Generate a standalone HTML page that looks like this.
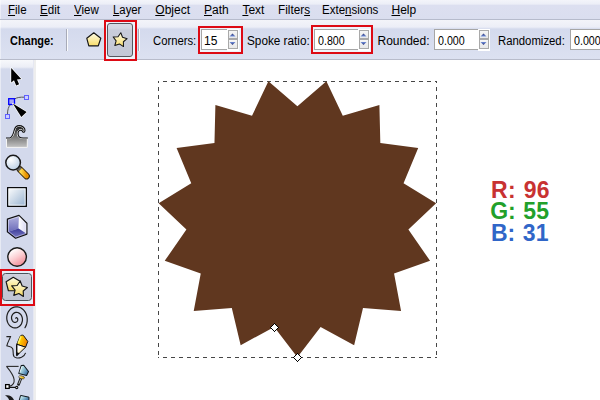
<!DOCTYPE html>
<html><head><meta charset="utf-8">
<style>
html,body{margin:0;padding:0;width:600px;height:400px;overflow:hidden;background:#fff;}
body{position:relative;font-family:"Liberation Sans",sans-serif;}
.a{position:absolute;}
#menubar{left:0;top:0;width:600px;height:19px;background:linear-gradient(#f3f4fa 0px,#eceef7 4px,#dcdff0 5.5px,#dadeef 19px);}
#menuline{left:0;top:19px;width:600px;height:1px;background:#b6bbcc;}
#toolbar{left:0;top:20px;width:600px;height:39px;background:linear-gradient(#f3f4f9 0px,#eceef7 7px,#d4daed 9px,#dce1f1 39px);}
#tbline{left:0;top:59px;width:600px;height:1px;background:#b8bccb;}
#toolbox{left:0;top:60px;width:33px;height:340px;background:linear-gradient(#f7f8fb 0px,#eceef6 7px,#d3d9ec 9px,#d3d9ec 340px);}
.t{position:absolute;font-size:12px;color:#000;white-space:nowrap;line-height:14px;transform-origin:0 0;}
.u{text-decoration:underline;}
.red{position:absolute;box-sizing:border-box;border:2px solid #dd0a14;}
.fld{position:absolute;box-sizing:border-box;top:29px;height:21px;background:#fff;border:1px solid #a6a6a6;border-right:none;}
.spw{position:absolute;top:29px;height:22px;width:12px;background:#fff;}
.spf{position:absolute;box-sizing:border-box;top:30px;height:19px;width:10px;border:1px solid #a9a9a9;background:#a9a9a9;}
.spb{position:absolute;left:0;width:8px;background:linear-gradient(#f6f6f6,#e8e8e8);}
.val{position:absolute;font-size:12px;line-height:14px;top:34px;white-space:nowrap;transform-origin:0 0;transform:scaleX(0.89);}
</style></head><body>
<div class="a" id="menubar"></div>
<div class="a" id="menuline"></div>
<div class="a" id="toolbar"></div>
<div class="a" id="tbline"></div>
<div class="a" id="toolbox"></div>
<div class="a" style="left:33px;top:60px;width:1px;height:340px;background:#e6e8f2"></div>
<div class="a" style="left:0;top:0;width:1px;height:19px;background:rgba(255,255,255,0.45)"></div>
<div class="a" style="left:0;top:20px;width:1px;height:39px;background:rgba(255,255,255,0.45)"></div>
<div class="a" style="left:0;top:60px;width:1px;height:340px;background:rgba(255,255,255,0.45)"></div>
<div class="a" style="left:34px;top:60px;width:2px;height:340px;background:#eeeeee"></div>

<!-- menu -->
<div class="t" style="left:8px;top:3px;transform:scaleX(.96)"><span class="u">F</span>ile</div>
<div class="t" style="left:39.5px;top:3px;transform:scaleX(.965)"><span class="u">E</span>dit</div>
<div class="t" style="left:74px;top:3px;transform:scaleX(.96)"><span class="u">V</span>iew</div>
<div class="t" style="left:112.5px;top:3px;transform:scaleX(.945)"><span class="u">L</span>ayer</div>
<div class="t" style="left:155.3px;top:3px"><span class="u">O</span>bject</div>
<div class="t" style="left:204px;top:3px"><span class="u">P</span>ath</div>
<div class="t" style="left:242.4px;top:3px"><span class="u">T</span>ext</div>
<div class="t" style="left:277.6px;top:3px;transform:scaleX(.98)">Filter<span class="u">s</span></div>
<div class="t" style="left:322.2px;top:3px;transform:scaleX(.96)">Exte<span class="u">n</span>sions</div>
<div class="t" style="left:391.5px;top:3px"><span class="u">H</span>elp</div>

<!-- toolbar -->
<div class="t" style="left:10px;top:34px;font-weight:bold;transform:scaleX(0.91)">Change:</div>
<div class="a" style="left:66px;top:29px;width:1px;height:22px;background:#a8abb8"></div>
<div class="a" style="left:67px;top:29px;width:1px;height:22px;background:#fafbfd"></div>
<div class="a" style="left:138px;top:29px;width:1px;height:22px;background:#a8abb8"></div>
<div class="a" style="left:139px;top:29px;width:1px;height:22px;background:#fafbfd"></div>

<div class="a" style="left:106px;top:22px;width:29px;height:37px;background:#eef2fa"></div>
<div class="a" style="box-sizing:border-box;left:107px;top:23px;width:26px;height:34px;border:1px solid #55575f;border-radius:3px;background:linear-gradient(#d8dbe5 0px,#d4d7e2 4px,#c9ccda 6px,#c3c7d6 32px)"></div>
<div class="red" style="left:104px;top:20px;width:33px;height:41px"></div>

<svg class="a" style="left:0;top:0" width="140" height="60">
<defs>
<linearGradient id="yg" x1="0" y1="0" x2="0" y2="1"><stop offset="0" stop-color="#fffde8"/><stop offset="1" stop-color="#f7dc6a"/></linearGradient>
</defs>
<polygon points="93.8,32.8 100.8,38.3 98.3,45.8 88.8,45.8 86.8,38.3" fill="url(#yg)" stroke="#151515" stroke-width="1.15" stroke-linejoin="round"/>
<polygon points="120.80,32.76 122.52,37.29 127.16,38.69 123.39,41.73 123.49,46.57 119.43,43.92 114.85,45.51 116.12,40.83 113.19,36.97 118.03,36.73" fill="url(#yg)" stroke="#151515" stroke-width="1.05" stroke-linejoin="round"/>
</svg>

<div class="t" style="left:153px;top:34px;transform:scaleX(0.94)">Corners:</div>
<div class="a" style="left:200px;top:28px;width:41px;height:24px;background:#eef3fa"></div>
<div class="fld" style="left:201px;width:26px"></div>
<div class="spw" style="left:227px"></div>
<div class="spf" style="left:228px"><div class="spb" style="top:0;height:7px"></div><div class="spb" style="top:9px;height:8px"></div></div>
<div class="val" style="left:204px;transform:none">15</div>
<div class="red" style="left:198px;top:26px;width:45px;height:28px"></div>

<div class="t" style="left:246.5px;top:34px;transform:scaleX(0.98)">Spoke ratio:</div>
<div class="a" style="left:313px;top:27px;width:58px;height:25px;background:#eef3fa"></div>
<div class="fld" style="left:314px;width:44px"></div>
<div class="spw" style="left:358px"></div>
<div class="spf" style="left:359px"><div class="spb" style="top:0;height:7px"></div><div class="spb" style="top:9px;height:8px"></div></div>
<div class="val" style="left:317.7px">0.800</div>
<div class="red" style="left:311px;top:25px;width:62px;height:29px"></div>

<div class="t" style="left:377.5px;top:34px">Rounded:</div>
<div class="fld" style="left:434px;width:44px"></div>
<div class="spw" style="left:478px"></div>
<div class="spf" style="left:479px"><div class="spb" style="top:0;height:7px"></div><div class="spb" style="top:9px;height:8px"></div></div>
<div class="val" style="left:437.7px">0.000</div>

<div class="t" style="left:498px;top:34px;transform:scaleX(0.945)">Randomized:</div>
<div class="fld" style="left:570px;width:40px"></div>
<div class="val" style="left:574px">0.000</div>

<svg class="a" style="left:0;top:0" width="600" height="60">
<defs>
<linearGradient id="ag" x1="0" y1="0" x2="0" y2="1"><stop offset="0" stop-color="#7090e0"/><stop offset="1" stop-color="#2c3470"/></linearGradient><linearGradient id="agu" x1="0" y1="1" x2="0" y2="0"><stop offset="0" stop-color="#7090e0"/><stop offset="1" stop-color="#2c3470"/></linearGradient>
</defs>
<g fill="url(#agu)">
<path d="M229.5 36.5 L232.5 33.5 L235.5 36.5 Z"/>
<path d="M360.5 36.5 L363.5 33.5 L366.5 36.5 Z"/>
<path d="M480.5 36.5 L483.5 33.5 L486.5 36.5 Z"/>
</g>
<g fill="url(#ag)">
<path d="M229.5 42 L235.5 42 L232.5 45 Z"/>
<path d="M360.5 42 L366.5 42 L363.5 45 Z"/>
<path d="M480.5 42 L486.5 42 L483.5 45 Z"/>
</g>
</svg>

<!-- canvas -->
<svg class="a" style="left:0;top:0" width="600" height="400">
<g fill="none" stroke="#464646" stroke-width="1" stroke-dasharray="4 4">
<path d="M158,81.5 H437" stroke-dashoffset="3"/>
<path d="M158,357.5 H437" stroke-dashoffset="3"/>
<path d="M158.5,81 V358" stroke-dashoffset="2"/>
<path d="M436.5,81 V358" stroke-dashoffset="2"/>
</g>
<polygon fill="#60371f" points="297.40,357.25 274.20,326.91 240.66,345.19 231.80,308.04 193.73,311.09 200.75,273.55 164.73,260.86 186.41,229.42 158.66,203.17 191.26,183.26 176.59,148.00 214.47,143.08 215.40,104.89 252.01,115.80 268.40,81.30 297.40,106.15 326.40,81.30 342.79,115.80 379.40,104.89 380.33,143.08 418.21,148.00 403.54,183.26 436.14,203.17 408.39,229.42 430.07,260.86 394.05,273.55 401.07,311.09 363.00,308.04 354.14,345.19 320.60,326.91"/>
<path d="M297.5 353.5 L301.5 357.5 L297.5 361.5 L293.5 357.5 Z" fill="#fff" stroke="#000" stroke-width="1" shape-rendering="crispEdges"/>
<path d="M274.5 323.5 L278.5 327.5 L274.5 331.5 L270.5 327.5 Z" fill="#fff" stroke="#000" stroke-width="1" shape-rendering="crispEdges"/>
</svg>

<div class="a" style="left:491px;top:179.6px;font-size:23px;font-weight:bold;line-height:21.5px;word-spacing:1.2px">
<div style="color:#c83232;letter-spacing:0.3px">R: 96</div>
<div style="color:#22a02a;margin-left:-0.8px">G: 55</div>
<div style="color:#3066c8">B: 31</div>
</div>

<!-- TOOLBOX -->
<svg class="a" style="left:0;top:0" width="40" height="400">
<defs>
<linearGradient id="wg" x1="0" y1="0" x2="0" y2="1"><stop offset="0" stop-color="#1e1e1e"/><stop offset="0.55" stop-color="#808080"/><stop offset="1" stop-color="#c4c4c4"/></linearGradient>
<radialGradient id="lens" cx="0.35" cy="0.3" r="0.8"><stop offset="0" stop-color="#ffffff"/><stop offset="1" stop-color="#b8cde4"/></radialGradient>
<linearGradient id="hg" x1="0" y1="0" x2="1" y2="0"><stop offset="0" stop-color="#ffd84a"/><stop offset="1" stop-color="#e89000"/></linearGradient>
<linearGradient id="rg" x1="0" y1="0" x2="1" y2="1"><stop offset="0" stop-color="#ffffff"/><stop offset="1" stop-color="#94b0cf"/></linearGradient>
<linearGradient id="eg" x1="0.25" y1="0.1" x2="0.75" y2="0.95"><stop offset="0" stop-color="#ffffff"/><stop offset="0.45" stop-color="#fcd0d4"/><stop offset="1" stop-color="#f08a96"/></linearGradient>
<linearGradient id="bl" x1="0" y1="0" x2="0" y2="1"><stop offset="0" stop-color="#b4b4e0"/><stop offset="1" stop-color="#6a6ab8"/></linearGradient>
<linearGradient id="br" x1="0" y1="0" x2="1" y2="0"><stop offset="0" stop-color="#ffffff"/><stop offset="1" stop-color="#d4d4f2"/></linearGradient>
<linearGradient id="bf" x1="0" y1="0" x2="0" y2="1"><stop offset="0" stop-color="#3a3a98"/><stop offset="1" stop-color="#7c7cc4"/></linearGradient>
<linearGradient id="yg2" x1="0" y1="0" x2="0" y2="1"><stop offset="0" stop-color="#fffde8"/><stop offset="1" stop-color="#f5d860"/></linearGradient>
<linearGradient id="btn" x1="0" y1="0" x2="0" y2="1"><stop offset="0" stop-color="#d0d3df"/><stop offset="0.2" stop-color="#c8cbd9"/><stop offset="1" stop-color="#c0c4d3"/></linearGradient>
<linearGradient id="pb" x1="0" y1="0" x2="1" y2="0.3"><stop offset="0" stop-color="#ffee30"/><stop offset="0.4" stop-color="#ffcc00"/><stop offset="1" stop-color="#f08400"/></linearGradient>
<linearGradient id="pw" x1="0" y1="0" x2="1" y2="1"><stop offset="0.3" stop-color="#ffffff"/><stop offset="1" stop-color="#f4c020"/></linearGradient>
<linearGradient id="nb" x1="0" y1="0.2" x2="1" y2="0.8"><stop offset="0" stop-color="#e0f4f8"/><stop offset="0.35" stop-color="#a8d4e0"/><stop offset="1" stop-color="#2e66a0"/></linearGradient>
<linearGradient id="gb" x1="0" y1="0" x2="1" y2="0"><stop offset="0" stop-color="#fffce8"/><stop offset="0.45" stop-color="#f8d040"/><stop offset="1" stop-color="#e8a800"/></linearGradient>
</defs>
<!-- selector arrow -->
<path d="M11.2,68 L11.2,82.6 L14,80.3 L16.2,85.6 L19.1,84.3 L17,79.4 L21.2,78.9 Z" fill="#000" stroke="#fff" stroke-width="1.4" stroke-linejoin="round" paint-order="stroke"/>
<!-- node tool -->
<path d="M7.5,114 C7.5,110 8.5,106.5 10.5,104.5" fill="none" stroke="#555" stroke-width="1"/>
<path d="M14.5,99 C17,97.5 20,97 24.5,97.2" fill="none" stroke="#555" stroke-width="1"/>
<rect x="24.5" y="95.5" width="4" height="4" fill="#ccd0ff" stroke="#6060ff" stroke-width="1"/>
<rect x="5.5" y="114.5" width="4" height="4" fill="#ccd0ff" stroke="#6060ff" stroke-width="1"/>
<rect x="8.7" y="98.7" width="5.8" height="5.8" fill="#a8a8f6" stroke="#0000ff" stroke-width="1.3"/>
<path d="M12.8,103.6 L26.6,112 L21.3,117 Z" fill="#000" stroke="#fff" stroke-width="1.4" stroke-linejoin="round" paint-order="stroke"/>
<!-- tweak wave -->
<path d="M6.5,138.6 L10,138.6 C12.7,137.4 13.9,134.2 14.7,130.7 C15.5,127.4 17.2,126.3 19.2,126.3 C21.8,126.3 24.2,128.1 24.3,130.3 C24.4,131.1 24,131.7 23.4,131.6 C22.9,130.4 21.9,129.5 20.4,129.6 C18.4,129.8 17.1,131.8 17.3,134.3 C17.5,137 19.8,138.6 23,138.6 L27.3,138.6 L27.3,147.4 L6.5,147.4 Z" fill="url(#wg)" stroke="#f4f4f4" stroke-width="1"/>
<path d="M6,138 L10,138 C12.2,137 13.3,134 14.1,130.5 C15,126.8 17,125.6 19.2,125.6 C22.2,125.6 25,127.7 25,130.3 C25,131.6 24.2,132.5 23.1,132.2 C22.6,131 21.8,130.2 20.4,130.3 C18.9,130.5 17.9,132.1 18.1,134.2 C18.3,136.4 20.4,137.9 23,138 L27.8,138" fill="none" stroke="#111" stroke-width="1.1"/>
<!-- zoom -->
<path d="M20,169.5 L26.6,176.1" stroke="#3a2a10" stroke-width="6.6" stroke-linecap="round"/>
<path d="M21,170.5 L26.5,176" stroke="url(#hg)" stroke-width="4.6" stroke-linecap="round"/>
<path d="M18.3,167.9 L20.3,169.9" stroke="#666" stroke-width="4"/>
<circle cx="13.1" cy="162.6" r="7.3" fill="url(#lens)" stroke="#1a1a1a" stroke-width="1.5"/>
<!-- rect -->
<rect x="7.7" y="187.7" width="18.6" height="18.6" fill="url(#rg)" stroke="#000" stroke-width="1.3"/>
<rect x="8.9" y="188.9" width="16.2" height="16.2" fill="none" stroke="#fff" stroke-width="0.9" opacity="0.85"/>
<!-- 3d box -->
<polygon points="19,215.4 7.4,219.1 7.4,231.9 18.6,228.5" fill="url(#bl)"/>
<polygon points="19,215.4 26.9,223.25 26.9,234.1 18.6,228.5" fill="url(#br)"/>
<polygon points="7.4,231.9 18.6,228.5 26.9,234.1 15.6,238.25" fill="url(#bf)"/>
<polygon points="19,215.4 26.9,223.25 26.9,234.1 15.6,238.25 7.4,231.9 7.4,219.1" fill="none" stroke="#111" stroke-width="1.2" stroke-linejoin="round"/>
<polygon points="19,216.6 25.8,223.6 25.8,233.5 15.7,237 8.5,231.4 8.5,219.9" fill="none" stroke="#fff" stroke-width="0.6" opacity="0.7"/>
<!-- ellipse -->
<circle cx="17.1" cy="257" r="9.3" fill="url(#eg)" stroke="#1a1a1a" stroke-width="1.4"/>
<!-- selected star tool button -->
<rect x="2" y="271" width="31" height="33" fill="#e6eef8"/>
<rect x="2.5" y="273.5" width="29" height="27" rx="3" ry="3" fill="url(#btn)" stroke="#4c545c" stroke-width="1"/>
<polygon points="13.25,277.25 20.5,281.6 18.2,290.75 8.4,290.75 6.1,281.75" fill="url(#yg2)" stroke="#151515" stroke-width="1.15" stroke-linejoin="round"/>
<polygon points="20.17,280.95 22.19,285.99 27.42,287.47 23.24,290.96 23.45,296.39 18.85,293.49 13.75,295.37 15.08,290.10 11.72,285.82 17.14,285.46" fill="url(#yg2)" stroke="#151515" stroke-width="1.15" stroke-linejoin="round"/>
<rect x="1" y="270" width="33" height="35" fill="none" stroke="#dd0a14" stroke-width="2"/>
<!-- spiral -->
<path transform="translate(0,0.4)" d="M15.71,317.79 L15.80,317.62 L15.93,317.48 L16.10,317.37 L16.31,317.32 L16.54,317.32 L16.79,317.38 L17.03,317.52 L17.26,317.73 L17.46,318.01 L17.62,318.35 L17.73,318.75 L17.76,319.18 L17.73,319.65 L17.61,320.12 L17.40,320.58 L17.11,321.00 L16.74,321.37 L16.30,321.67 L15.80,321.88 L15.25,321.98 L14.67,321.96 L14.09,321.81 L13.51,321.53 L12.97,321.12 L12.49,320.58 L12.08,319.93 L11.77,319.18 L11.58,318.35 L11.51,317.47 L11.58,316.56 L11.80,315.65 L12.16,314.78 L12.66,313.98 L13.29,313.27 L14.04,312.70 L14.88,312.27 L15.80,312.02 L16.77,311.96 L17.75,312.11 L18.71,312.47 L19.63,313.03 L20.47,313.78 L21.19,314.72 L21.77,315.81 L22.19,317.04 L22.42,318.35 L22.45,319.72 L22.28,321.10 L21.88,322.45 L21.28,323.72 L20.49,324.87 L19.51,325.85 L18.38,326.64 L17.14,327.19 L15.80,327.48 L14.42,327.49 L13.03,327.22 L11.69,326.66 L10.43,325.82 L9.30,324.72 L8.33,323.38 L7.57,321.84 L7.04,320.15 L6.78,318.35 L6.78,316.49 L7.07,314.64 L7.64,312.85 L8.48,311.18 L9.57,309.69 L10.89,308.42 L12.39,307.43 L14.05,306.76 L15.80,306.42 L17.60,306.45 L19.39,306.85 L21.11,307.62 L22.71,308.74 L24.14,310.18 L25.35,311.92 L26.28,313.90 L26.92,316.06 L27.22,318.35 L27.18,320.69 L26.79,323.01 L26.04,325.25 L24.96,327.32" fill="none" stroke="#1e1e1e" stroke-width="1.2" stroke-linecap="round"/>
<!-- pencil -->
<path d="M6.4,336.6 L10.5,336.6 C9.5,339.5 7.5,342.5 6.8,345.8 C9,346.5 11.5,346.5 12.6,348.5 C13.6,350.5 12.6,353.5 13.8,356.3 C15,358.3 18.5,358.6 21.5,357.2 C23.5,356.2 25,354.8 25.6,352.8" fill="none" stroke="#222" stroke-width="1.1"/>
<path d="M16.8,344.3 L20.2,336.2 C20.8,335.2 22.6,334.9 23.4,335.4 L27.8,341.4 L25.6,347.2 Z" fill="url(#pb)" stroke="#111" stroke-width="1" stroke-linejoin="round"/>
<path d="M20.9,336.4 L18.2,343.4" stroke="#fff36a" stroke-width="1.6"/>
<polygon points="16.8,344.3 25.6,347.2 16.8,355.6" fill="url(#pw)" stroke="#111" stroke-width="1" stroke-linejoin="round"/>
<path d="M16.6,344.5 L16.6,355.5" stroke="#111" stroke-width="1.2"/>
<polygon points="16.2,352 19.6,353.2 16.7,356.2" fill="#111"/>
<!-- pen -->
<path d="M6.5,366.4 L18.6,366.4" stroke="#2a2a2a" stroke-width="1.1"/>
<path d="M6.5,366.4 C9.5,370 13.5,375 14.1,379.5 C14.6,383 12.5,385.5 9.1,386.4" fill="none" stroke="#2a2a2a" stroke-width="1.1"/>
<path d="M9.1,387.3 L15.5,387.4" stroke="#111" stroke-width="1.2"/>
<circle cx="16.7" cy="387.5" r="1.15" fill="#fff" stroke="#111" stroke-width="1.1"/>
<rect x="5.6" y="384.6" width="3.6" height="3.8" fill="#fff" stroke="#000" stroke-width="1.25"/>
<path d="M20.8,378.6 L18.5,384.4" stroke="#1e1e1e" stroke-width="2.8" stroke-linecap="round"/>
<path d="M20.6,379.2 L18.8,383.8" stroke="#c8d0d4" stroke-width="0.9"/>
<ellipse cx="21.6" cy="377.3" rx="3" ry="1.4" transform="rotate(14 21.6 377.3)" fill="url(#gb)" stroke="#2a2a20" stroke-width="0.6"/>

<path d="M18.8,373.4 L21.3,365.5 L23.7,365.2 L28.5,371.5 L26.6,375.4 Z" fill="url(#nb)" stroke="#10181c" stroke-width="1.05" stroke-linejoin="round"/>
<path d="M21.9,366.4 L19.9,372.4" stroke="#f4fcff" stroke-width="1" opacity="0.8"/>
<!-- calligraphy (partial) -->
<path d="M5,395.6 C8.5,394.6 12.5,396 14.5,401 L9.5,401 C8.8,398.5 7.2,396.6 5,395.6 Z" fill="#1c1c1c"/>
<path d="M19,401 L20.6,395.4 L29,397.2 L28.8,401 Z" fill="url(#nb)" stroke="#10181c" stroke-width="1"/>
</svg>

</body></html>
